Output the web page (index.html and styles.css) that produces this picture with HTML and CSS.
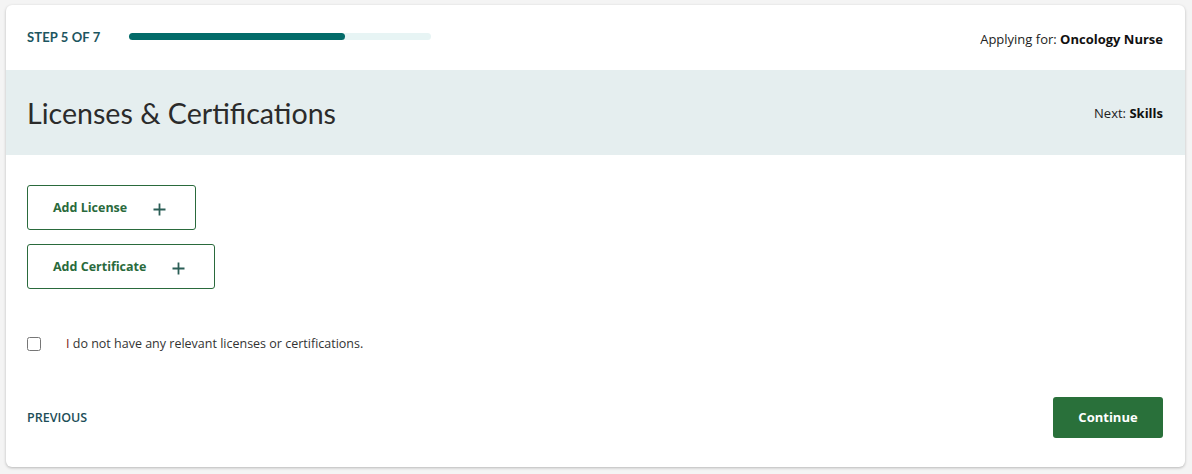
FILE: index.html
```html
<!DOCTYPE html>
<html>
<head>
<meta charset="UTF-8">
<title>Licenses &amp; Certifications</title>
<link rel="stylesheet" href="styles.css">
</head>
<body>
<div class="kortti">
	<div class="ylarivi">
		<div class="vaihe">
			<span class="vaihe-teksti">STEP 5 OF 7</span>
			<div class="palkki"><div class="palkki-tayte" style="width: 71.4%"></div></div>
		</div>
		<div class="hakemus">Applying for: <b>Oncology Nurse</b></div>
	</div>
	<div class="otsikko">
		<h1>Licenses &amp; Certifications</h1>
		<div class="seuraava">Next: <b>Skills</b></div>
	</div>
	<div class="sisalto">
		<button class="lisaanappi">Add License <svg class="plus" width="13" height="13" viewBox="0 0 13 13"><path d="M6.5 0.5v12M0.5 6.5h12"/></svg></button>
		<button class="lisaanappi">Add Certificate <svg class="plus" width="13" height="13" viewBox="0 0 13 13"><path d="M6.5 0.5v12M0.5 6.5h12"/></svg></button>
		<label class="valinta">
			<input type="checkbox" id="eiluvat">
			<span><span class="iso-i">I</span> do not have any relevant licenses or certifications.</span>
		</label>
	</div>
	<div class="alarivi">
		<a class="edellinen" href="#">PREVIOUS</a>
		<button class="jatka">Continue</button>
	</div>
</div>
</body>
</html>
```

FILE: styles.css
```css
body {
	margin: 0;
	padding: 5px 7px 7px 6px;
	background-color: #f4f4f4;
	font-family: "Open Sans", "Liberation Sans", sans-serif;
	color: #222;
}

.kortti {
	background-color: #fff;
	border-radius: 6px;
	box-shadow: 0 1px 3px rgba(0, 0, 0, 0.25);
	overflow: hidden;
}

.ylarivi {
	height: 65px;
	padding: 0 22px 0 21px;
	display: flex;
	align-items: center;
	justify-content: space-between;
}

.vaihe {
	display: flex;
	align-items: center;
	gap: 29px;
	margin-top: -2px;
}

.vaihe-teksti {
	font-family: Lato, sans-serif;
	font-weight: 700;
	font-size: 13px;
	letter-spacing: 0.1px;
	color: #1c5560;
}

.palkki {
	width: 302px;
	height: 7px;
	border-radius: 4px;
	background-color: #e7f4f4;
}
.palkki-tayte {
	height: 100%;
	border-radius: 4px;
	background-color: #036b69;
}

.hakemus, .seuraava {
	font-size: 13px;
	color: #222;
}
.hakemus {
	margin-top: 3px;
}
.hakemus b, .seuraava b {
	font-weight: 700;
	color: #111;
}

.otsikko {
	height: 85px;
	padding: 0 22px 0 21px;
	background-color: #e5eeef;
	display: flex;
	align-items: center;
	justify-content: space-between;
}
.otsikko h1 {
	margin: 0;
	font-family: Lato, sans-serif;
	font-weight: 400;
	font-size: 28.6px;
	color: #2b2b2b;
}

.sisalto {
	padding: 30px 21px 0 21px;
	display: flex;
	flex-direction: column;
	align-items: flex-start;
}

.lisaanappi {
	height: 45px;
	padding: 0 29px 0 25px;
	margin-bottom: 14px;
	display: flex;
	align-items: center;
	gap: 26px;
	background-color: #fff;
	border: 1px solid #2a6a3c;
	border-radius: 3px;
	font-family: "Open Sans", sans-serif;
	font-weight: 700;
	font-size: 12.5px;
	color: #2a6a3c;
	cursor: pointer;
}
.plus {
	margin-top: 3px;
	fill: none;
	stroke: #2b5e56;
	stroke-width: 1.8;
}

.valinta {
	margin-top: 32px;
	display: flex;
	align-items: center;
	gap: 25px;
	font-size: 12.5px;
	color: #333;
}
.valinta input {
	margin: 0;
	width: 14px;
	height: 14px;
}
.iso-i {
	color: #7a2020;
}

.alarivi {
	height: 100px;
	padding: 0 22px 0 21px;
	margin-top: 15px;
	display: flex;
	align-items: center;
	justify-content: space-between;
}
.edellinen {
	font-size: 12.5px;
	font-weight: 600;
	color: #1d4e58;
	text-decoration: none;
}
.jatka {
	width: 110px;
	height: 41px;
	border: none;
	border-radius: 3px;
	background-color: #29703a;
	color: #fff;
	font-family: "Open Sans", sans-serif;
	font-weight: 700;
	font-size: 13px;
	cursor: pointer;
}
```
